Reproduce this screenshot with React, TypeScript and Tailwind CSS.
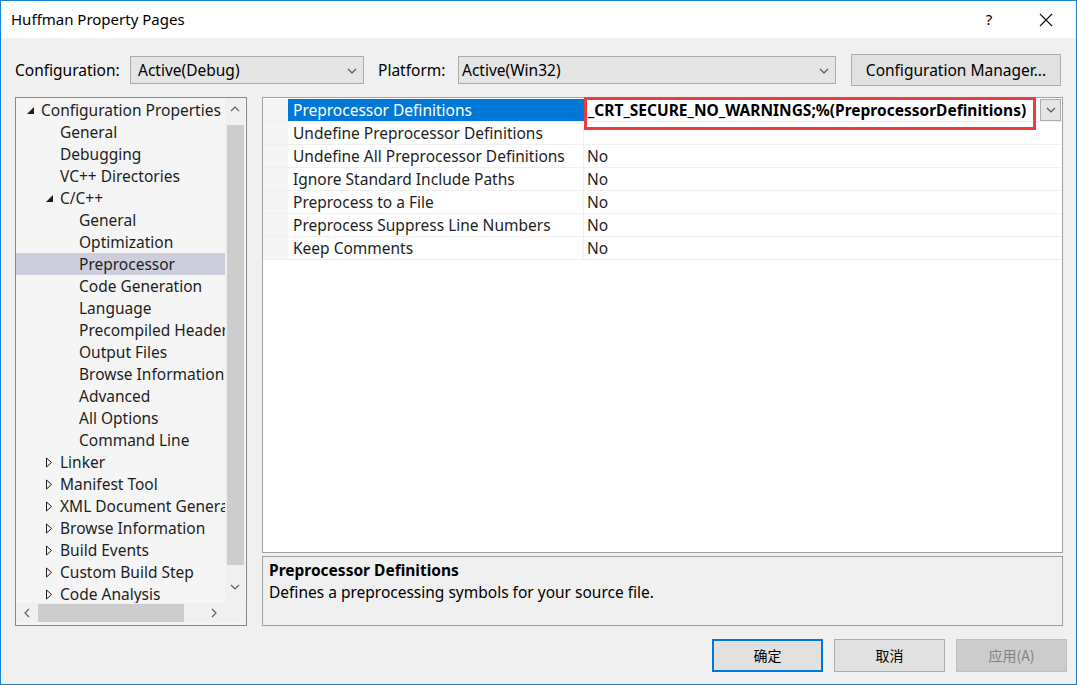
import React from "react";

const FONT = { fontFamily: '"Noto Sans", "Open Sans", "Noto Sans CJK SC", sans-serif' };

function Chevron({ dir = "down", className = "" }: { dir?: "down" | "up" | "left" | "right"; className?: string }) {
  const paths: Record<string, string> = {
    down: "M1 3 L5 7 L9 3",
    up: "M1 7 L5 3 L9 7",
    left: "M7 1 L3 5 L7 9",
    right: "M3 1 L7 5 L3 9",
  };
  return (
    <svg width="10" height="10" viewBox="0 0 10 10" className={className}>
      <path d={paths[dir]} fill="none" stroke="currentColor" strokeWidth="1.2" />
    </svg>
  );
}

function Expanded() {
  return (
    <svg width="9" height="9" viewBox="0 0 9 9">
      <path d="M8 1 L8 8 L1 8 Z" fill="#1e1e1e" />
    </svg>
  );
}
function Collapsed() {
  return (
    <svg width="8" height="11" viewBox="0 0 8 11">
      <path d="M1.5 1 L6.5 5.5 L1.5 10 Z" fill="none" stroke="#1e1e1e" strokeWidth="1" />
    </svg>
  );
}

type Node = { label: string; level: number; arrow?: "exp" | "col"; sel?: boolean };
const tree: Node[] = [
  { label: "Configuration Properties", level: 0, arrow: "exp" },
  { label: "General", level: 1 },
  { label: "Debugging", level: 1 },
  { label: "VC++ Directories", level: 1 },
  { label: "C/C++", level: 1, arrow: "exp" },
  { label: "General", level: 2 },
  { label: "Optimization", level: 2 },
  { label: "Preprocessor", level: 2, sel: true },
  { label: "Code Generation", level: 2 },
  { label: "Language", level: 2 },
  { label: "Precompiled Headers", level: 2 },
  { label: "Output Files", level: 2 },
  { label: "Browse Information", level: 2 },
  { label: "Advanced", level: 2 },
  { label: "All Options", level: 2 },
  { label: "Command Line", level: 2 },
  { label: "Linker", level: 1, arrow: "col" },
  { label: "Manifest Tool", level: 1, arrow: "col" },
  { label: "XML Document Generator", level: 1, arrow: "col" },
  { label: "Browse Information", level: 1, arrow: "col" },
  { label: "Build Events", level: 1, arrow: "col" },
  { label: "Custom Build Step", level: 1, arrow: "col" },
  { label: "Code Analysis", level: 1, arrow: "col" },
];

const textIndent = ["pl-[25px]", "pl-[44px]", "pl-[63px]"];

const props: [string, string][] = [
  ["Undefine Preprocessor Definitions", ""],
  ["Undefine All Preprocessor Definitions", "No"],
  ["Ignore Standard Include Paths", "No"],
  ["Preprocess to a File", "No"],
  ["Preprocess Suppress Line Numbers", "No"],
  ["Keep Comments", "No"],
];

export default function App() {
  return (
    <div
      style={FONT}
      className="w-[1077px] h-[685px] border border-[#1883d7] bg-[#f0f0f0] flex flex-col overflow-hidden text-[15.5px] text-[#1e1e1e]"
    >
      {/* Title bar */}
      <div className="h-[37px] bg-white flex items-center shrink-0">
        <div className="pl-[10px] text-[15px] text-black flex-1">Huffman Property Pages</div>
        <div className="w-[20px] text-center text-[15px] text-black mr-[40px]">?</div>
        <svg width="14" height="14" viewBox="0 0 14 14" className="mr-[23px]">
          <path d="M1 1 L13 13 M13 1 L1 13" stroke="#111" strokeWidth="1.1" />
        </svg>
      </div>

      {/* Configuration row */}
      <div className="flex items-center h-[32px] mt-[16px] pl-[14px] shrink-0">
        <span className="w-[115px] text-black pt-[2px]">Configuration:</span>
        <div className="w-[234px] h-[28px] bg-[#e5e5e5] border border-[#acacac] flex items-center pl-[7px] pr-[6px] pt-[2px] text-black">
          <span className="flex-1">Active(Debug)</span>
          <Chevron className="text-[#555]" />
        </div>
        <span className="ml-[14px] w-[80px] text-black pt-[2px]">Platform:</span>
        <div className="w-[378px] h-[28px] bg-[#e5e5e5] border border-[#acacac] flex items-center pl-[3px] pr-[6px] pt-[2px] text-black">
          <span className="flex-1">Active(Win32)</span>
          <Chevron className="text-[#555]" />
        </div>
        <div className="ml-[15px] w-[210px] h-[32px] bg-[#e1e1e1] border border-[#adadad] flex items-center justify-center pt-[2px] text-black">
          Configuration Manager...
        </div>
      </div>

      {/* Main area */}
      <div className="flex mt-[11px] pl-[14px] h-[529px] shrink-0">
        {/* Tree */}
        <div className="w-[232px] h-[529px] border border-[#828790] bg-[#f5f5f5] flex flex-col">
          <div className="flex h-[505px]">
            <div className="w-[209px] overflow-hidden pt-[1px]">
              {tree.map((n, i) => (
                <div
                  key={i}
                  className={`relative h-[22px] flex items-center pt-[2px] whitespace-nowrap ${textIndent[n.level]} ${n.sel ? "bg-[#cccedb]" : ""}`}
                >
                  {n.arrow && (
                    <span className={`absolute left-0 top-0 h-[22px] flex items-center ${n.level === 0 ? "pl-[10px]" : "pl-[29px]"}`}>
                      {n.arrow === "exp" ? <Expanded /> : <Collapsed />}
                    </span>
                  )}
                  <span>{n.label}</span>
                </div>
              ))}
            </div>
            {/* vertical scrollbar */}
            <div className="w-[20px] bg-[#f0f0f0] flex flex-col items-center">
              <div className="h-[22px] flex items-center text-[#606060]">
                <Chevron dir="up" />
              </div>
              <div className="w-[17px] h-[440px] mt-[5px] bg-[#cdcdcd]" />
              <div className="flex-1" />
              <div className="h-[20px] flex items-center text-[#606060] mb-[6px]">
                <Chevron dir="down" />
              </div>
            </div>
          </div>
          {/* horizontal scrollbar */}
          <div className="flex h-[20px]">
            <div className="w-[209px] bg-[#f0f0f0] flex items-center">
              <div className="w-[22px] flex justify-center text-[#606060]">
                <Chevron dir="left" />
              </div>
              <div className="w-[146px] h-[18px] bg-[#cdcdcd]" />
              <div className="flex-1" />
              <div className="w-[22px] flex justify-center text-[#606060]">
                <Chevron dir="right" />
              </div>
            </div>
            <div className="flex-1 bg-[#f0f0f0]" />
          </div>
        </div>

        {/* Right column */}
        <div className="ml-[15px] w-[801px] flex flex-col">
          {/* property grid */}
          <div className="relative h-[457px] border border-[#a0a0a0] bg-white">
            <div className="flex h-[23px] mt-[1px] border-b border-[#f0f0f0]">
              <div className="w-[25px] bg-[#f5f5f5]" />
              <div className="w-[296px] bg-[#0078d7] text-white pl-[5px] pt-[2px] flex items-center">Preprocessor Definitions</div>
              <div className="flex-1 pl-[4px] pt-[1px] flex items-center font-bold text-black whitespace-nowrap">
                _CRT_SECURE_NO_WARNINGS;%(PreprocessorDefinitions)
              </div>
              <div className="w-[21px] h-[22px] mr-[1px] bg-[#e5e5e5] border border-[#acacac] flex items-center justify-center text-[#555]">
                <Chevron />
              </div>
            </div>
            {props.map(([k, v], i) => (
              <div key={i} className="flex h-[23px] border-b border-[#f0f0f0]">
                <div className="w-[25px] bg-[#f5f5f5]" />
                <div className="w-[296px] pl-[5px] pt-[2px] flex items-center border-r border-[#f0f0f0]">{k}</div>
                <div className="flex-1 pl-[3px] pt-[2px] flex items-center">{v}</div>
              </div>
            ))}
            {/* red highlight box */}
            <div className="absolute left-[321px] top-[-1px] w-[452px] h-[33px] border-[3px] border-[#ef3b3b]" />
          </div>
          {/* description */}
          <div className="mt-[3px] h-[70px] border border-[#a0a0a0] bg-[#f0f0f0] px-[6px] pt-[2px] text-black">
            <div className="font-bold leading-[22px]">Preprocessor Definitions</div>
            <div className="leading-[23px]">Defines a preprocessing symbols for your source file.</div>
          </div>
        </div>
      </div>

      {/* Buttons */}
      <div className="flex justify-end gap-[11px] pr-[9px] mt-[13px] text-[14px]" style={{ fontFamily: '"Noto Sans CJK SC", "Noto Sans", sans-serif' }}>
        <div className="w-[111px] h-[33px] border-2 border-[#0078d7] bg-[#e1e1e1] flex items-center justify-center text-black">确定</div>
        <div className="w-[111px] h-[33px] border border-[#adadad] bg-[#e1e1e1] flex items-center justify-center text-black">取消</div>
        <div className="w-[111px] h-[33px] border border-[#bfbfbf] bg-[#cccccc] flex items-center justify-center text-[#838383]">应用(A)</div>
      </div>
    </div>
  );
}
